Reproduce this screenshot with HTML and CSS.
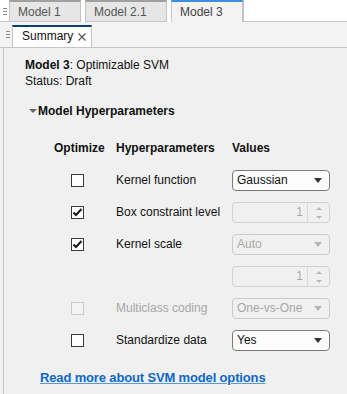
FILE: index.html
```html
<!DOCTYPE html>
<html lang="en">
<head>
    <meta charset="UTF-8">
    <meta name="viewport" content="width=device-width, initial-scale=1.0">
    <title>Model 3 Summary</title>
    <link rel="stylesheet" href="styles.css">
</head>
<body>
    <div class="doc-tabs">
        <div class="grip grip-top"><span></span><span></span><span></span></div>
        <div class="doc-tab">Model 1</div>
        <div class="doc-tab">Model 2.1</div>
        <div class="doc-tab active">Model 3</div>
        <div class="doc-fill"></div>
    </div>

    <div class="panel-tabs">
        <div class="grip grip-panel"><span></span><span></span><span></span></div>
        <div class="panel-tab">Summary <svg class="close" width="8" height="8" viewBox="0 0 8 8"><path d="M0.5 0.5 L7.5 7.5 M7.5 0.5 L0.5 7.5" stroke="#555" stroke-width="1.2"/></svg></div>
    </div>

    <div class="pane">
        <div class="info"><b>Model 3</b>: Optimizable SVM</div>
        <div class="info">Status: Draft</div>

        <div class="section-head"><span class="caret"></span>Model Hyperparameters</div>

        <div class="params">
            <div class="col-head">Optimize</div>
            <div class="col-head">Hyperparameters</div>
            <div class="col-head">Values</div>

            <div class="cell"><span class="check"></span></div>
            <div class="cell">Kernel function</div>
            <div class="cell"><div class="dropdown"><span>Gaussian</span><i class="arrow"></i></div></div>

            <div class="cell"><span class="check checked"><svg width="11" height="11" viewBox="0 0 11 11"><polyline points="1.5,5.5 4,8 9.5,2" fill="none" stroke="#1a1a1a" stroke-width="2"/></svg></span></div>
            <div class="cell">Box constraint level</div>
            <div class="cell"><div class="spinner"><span class="spin-value">1</span><span class="spin-btns"><i class="up"></i><i class="down"></i></span></div></div>

            <div class="cell"><span class="check checked"><svg width="11" height="11" viewBox="0 0 11 11"><polyline points="1.5,5.5 4,8 9.5,2" fill="none" stroke="#1a1a1a" stroke-width="2"/></svg></span></div>
            <div class="cell">Kernel scale</div>
            <div class="cell"><div class="dropdown disabled"><span>Auto</span><i class="arrow"></i></div></div>

            <div class="cell"></div>
            <div class="cell"></div>
            <div class="cell"><div class="spinner"><span class="spin-value">1</span><span class="spin-btns"><i class="up"></i><i class="down"></i></span></div></div>

            <div class="cell"><span class="check disabled"></span></div>
            <div class="cell muted">Multiclass coding</div>
            <div class="cell"><div class="dropdown disabled"><span>One-vs-One</span><i class="arrow"></i></div></div>

            <div class="cell"><span class="check"></span></div>
            <div class="cell">Standardize data</div>
            <div class="cell"><div class="dropdown"><span>Yes</span><i class="arrow"></i></div></div>
        </div>

        <a class="more-link" href="#">Read more about SVM model options</a>
    </div>
</body>
</html>
```

FILE: styles.css
```css
body {
    margin: 0;
    background-color: #f0f0f0;
    font-family: "Liberation Sans", Arial, sans-serif;
    font-size: 12px;
    color: #111;
}

/* top document tabs */
.doc-tabs {
    display: flex;
    height: 22px;
    background-color: #fff;
}
.grip {
    display: flex;
    flex-direction: column;
    gap: 2px;
    box-sizing: border-box;
}
.grip span {
    display: block;
    width: 4px;
    height: 1px;
    background-color: #8c8c8c;
}
.grip-top {
    width: 9px;
    padding: 8px 0 0 3px;
    border-bottom: 1px solid #c4c4c4;
}
.doc-tab {
    box-sizing: border-box;
    width: 72px;
    margin-right: 4px;
    padding: 3px 0 0 8px;
    background-color: #e6e6e6;
    border: 1px solid #c4c4c4;
    border-top: 2px solid #a0a0a0;
    color: #555;
    font-size: 12px;
}
.doc-tab:nth-child(3) {
    width: 82px;
}
.doc-tab.active {
    background-color: #f3f3f3;
    border-top-color: #3c8ee0;
    border-bottom: none;
    color: #444;
    margin-right: 0;
}
.doc-fill {
    flex: 1;
    border-bottom: 1px solid #c4c4c4;
    border-left: 1px solid #c4c4c4;
}

/* panel tab strip */
.panel-tabs {
    display: flex;
    height: 26px;
    box-sizing: border-box;
    background-color: #f3f3f3;
    border-bottom: 1px solid #c4c4c4;
}
.grip-panel {
    width: 12px;
    padding: 9px 0 0 6px;
}
.panel-tab {
    box-sizing: border-box;
    width: 80px;
    margin-top: 3px;
    padding: 2px 0 0 9px;
    background-color: #fff;
    border-left: 1px solid #c4c4c4;
    border-right: 1px solid #c4c4c4;
    border-top: 2px solid #0c3d6e;
    color: #111;
}
.close {
    margin-left: 1px;
    vertical-align: -1px;
}

/* main pane */
.pane {
    margin-left: 3px;
    border-left: 1px solid #c8c8c8;
    padding: 9px 0 8px 21px;
    min-height: 330px;
}
.info {
    line-height: 16px;
}
.section-head {
    display: flex;
    align-items: center;
    margin: 14px 0 0 4px;
    line-height: 16px;
    font-weight: bold;
}
.caret {
    width: 0;
    height: 0;
    margin-right: 1px;
    border-left: 4px solid transparent;
    border-right: 4px solid transparent;
    border-top: 4px solid #666;
}

/* hyperparameter table */
.params {
    display: grid;
    grid-template-columns: 62px 116px 98px;
    grid-auto-rows: 32px;
    margin: 13px 0 0 29px;
}
.col-head {
    display: flex;
    align-items: center;
    font-weight: bold;
}
.cell {
    display: flex;
    align-items: center;
}
.cell.muted {
    color: #a6a6a6;
}
.check {
    display: flex;
    align-items: center;
    justify-content: center;
    box-sizing: border-box;
    width: 13px;
    height: 13px;
    margin-left: 17px;
    background-color: #fff;
    border: 1px solid #3a3a3a;
}
.check.disabled {
    background-color: #f3f3f3;
    border-color: #cacaca;
}
.dropdown {
    display: flex;
    align-items: center;
    justify-content: space-between;
    box-sizing: border-box;
    width: 98px;
    height: 21px;
    padding: 0 7px 0 4px;
    background-color: #fcfcfc;
    border: 1px solid #7a7a7a;
    border-radius: 4px;
}
.arrow {
    width: 0;
    height: 0;
    border-left: 4px solid transparent;
    border-right: 4px solid transparent;
    border-top: 5px solid #333;
}
.dropdown.disabled {
    background-color: #f0f0f0;
    border-color: #cbcbcb;
    color: #a8a8a8;
}
.dropdown.disabled .arrow {
    border-top-color: #b4b4b4;
}
.spinner {
    display: flex;
    box-sizing: border-box;
    width: 98px;
    height: 21px;
    border: 1px solid #d2d2d2;
    border-radius: 4px;
    color: #a8a8a8;
}
.spin-value {
    flex: 1;
    display: flex;
    align-items: center;
    justify-content: flex-end;
    padding-right: 4px;
    border-right: 1px solid #dadada;
}
.spin-btns {
    display: flex;
    flex-direction: column;
    align-items: center;
    justify-content: space-between;
    width: 21px;
    padding: 4px 0 3px;
    box-sizing: border-box;
}
.spin-btns .up,
.spin-btns .down {
    width: 0;
    height: 0;
    border-left: 3px solid transparent;
    border-right: 3px solid transparent;
}
.spin-btns .up {
    border-bottom: 3px solid #b8b8b8;
}
.spin-btns .down {
    border-top: 3px solid #b8b8b8;
}

.more-link {
    display: inline-block;
    margin: 14px 0 0 15px;
    line-height: 16px;
    font-size: 13px;
    letter-spacing: -0.15px;
    font-weight: bold;
    color: #0e68c6;
    text-decoration: underline;
    text-decoration-color: #5a9be0;
}
```
